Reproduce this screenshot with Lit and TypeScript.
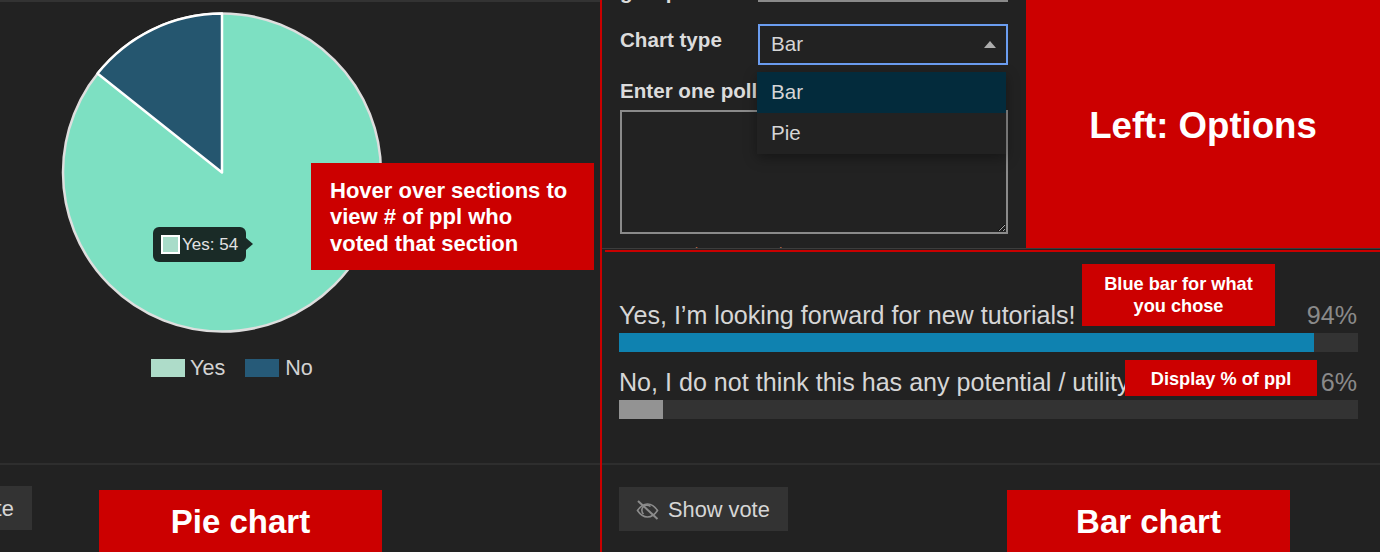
import { LitElement, html, css, svg } from 'lit';
import { customElement } from 'lit/decorators.js';

const CX = 170;
const CY = 170.5;
const R = 159;
// the "No" slice runs from 12 o'clock back to this rim point
const NO_X = CX - 124.5;
const NO_Y = CY - 99;

const options = [
  { label: 'Yes, I’m looking forward for new tutorials!', pct: 94, chosen: true },
  { label: 'No, I do not think this has any potential / utility', pct: 6, chosen: false },
];

@customElement('app-root')
export class AppRoot extends LitElement {
  static styles = css`
    :host {
      display: block;
      position: relative;
      width: 1380px;
      height: 552px;
      overflow: hidden;
      background: #222222;
      color: #d6d6d6;
      font-family: 'Liberation Sans', Arial, sans-serif;
    }

    .page {
      display: flex;
      height: 552px;
    }

    /* left panel: pie */
    .pie-panel {
      display: flex;
      flex-direction: column;
      flex: 0 0 600px;
      box-sizing: border-box;
      border-top: 2px solid #333333;
      overflow: hidden;
    }

    .pie-body {
      display: flex;
      flex-direction: column;
      height: 461px;
      box-sizing: border-box;
    }

    .pie {
      display: block;
      width: 340px;
      height: 340px;
      margin-left: 52px;
    }

    .legend {
      display: flex;
      align-items: center;
      margin: 14px 0 0 151px;
      font-size: 21.6px;
      line-height: 24px;
      color: #d2d2d2;
    }

    .swatch {
      width: 34px;
      height: 18px;
    }

    .swatch.yes {
      background: #aedcc9;
      margin-right: 5px;
    }

    .swatch.no {
      background: #265a78;
      margin-left: 20px;
      margin-right: 6px;
    }

    .footer {
      flex: 1;
      border-top: 2px solid #2e2e2e;
      padding-top: 21px;
    }

    .pie-panel .vote-btn {
      margin-left: -137px;
    }

    .vote-btn {
      display: inline-flex;
      align-items: center;
      box-sizing: border-box;
      width: 169px;
      height: 44px;
      padding: 1px 0 0 17px;
      gap: 9px;
      background: #333333;
      color: #d6d6d6;
      font-size: 21.8px;
    }

    .vote-btn svg {
      flex: none;
      width: 23px;
      height: 20px;
    }

    /* right column */
    .right {
      display: flex;
      flex-direction: column;
      flex: 1;
      min-width: 0;
      border-left: 2px solid #c90000;
    }

    .top {
      display: flex;
      flex: 0 0 248px;
      overflow: hidden;
    }

    .form {
      display: flex;
      flex-direction: column;
      flex: 0 0 424px;
      box-sizing: border-box;
      padding-left: 18px;
      overflow: hidden;
    }

    .field {
      display: flex;
      flex: none;
      height: 41px;
    }

    .field.cut {
      margin-top: -39px;
      margin-bottom: 22px;
    }

    .field-label {
      flex: 0 0 138px;
      padding-top: 4px;
      font-size: 20.6px;
      line-height: 23px;
      font-weight: 700;
      color: #dcdcdc;
    }

    .field.cut .field-label {
      padding-top: 19px;
    }

    .input {
      flex: none;
      box-sizing: border-box;
      width: 250px;
      height: 41px;
      border: 2px solid #8a8a8a;
    }

    .select {
      position: relative;
      display: flex;
      align-items: center;
      padding: 0 0 2px 11px;
      border-color: #6b9df0;
      font-size: 20.6px;
    }

    .caret {
      position: absolute;
      right: 10px;
      top: 15px;
      border-left: 6px solid transparent;
      border-right: 6px solid transparent;
      border-bottom: 7px solid #adadad;
    }

    .menu {
      position: absolute;
      left: -3px;
      top: 46px;
      z-index: 2;
      width: 249px;
      background: #222222;
      box-shadow: 0 4px 12px rgba(0, 0, 0, 0.35);
    }

    .menu div {
      box-sizing: border-box;
      height: 41px;
      padding-left: 14px;
      font-size: 20.6px;
      line-height: 39px;
    }

    .menu .active {
      background: #032b3c;
    }

    .poll-label {
      flex: none;
      margin-top: 14px;
      height: 23px;
      font-size: 20.6px;
      line-height: 23px;
      font-weight: 700;
      color: #dcdcdc;
    }

    textarea {
      display: block;
      flex: none;
      box-sizing: border-box;
      width: 388px;
      height: 124px;
      margin: 8px 0 0;
      padding: 0;
      border: 2px solid #8a8a8a;
      border-radius: 0;
      background: transparent;
      outline: none;
    }

    .hint {
      flex: none;
      margin: 11px 0 0 8px;
      font-size: 15px;
      line-height: 15px;
      color: #b8674a;
      white-space: nowrap;
    }

    .options-title {
      display: flex;
      flex: 1;
      align-items: center;
      justify-content: center;
      padding-top: 3px;
      background: #cc0000;
      color: #ffffff;
      font-size: 36.6px;
      font-weight: 700;
    }

    .rules {
      flex: none;
      height: 4px;
      box-sizing: border-box;
      border-top: 1px solid #3c3c3c;
    }

    .rules div {
      height: 2px;
      margin: 1px 0 0 3px;
      background: #c90000;
    }

    .bars {
      display: flex;
      flex-direction: column;
      flex: 0 0 211px;
      box-sizing: border-box;
      padding: 47px 22px 0 17px;
    }

    .bar-head {
      display: flex;
      justify-content: space-between;
      align-items: baseline;
      height: 34px;
      font-size: 25.1px;
      line-height: 32px;
      white-space: nowrap;
    }

    .pct {
      padding-right: 1px;
      color: #8a8a8a;
    }

    .track {
      height: 19px;
      margin-bottom: 14px;
      background: #333333;
    }

    .fill {
      height: 100%;
      background: #939393;
    }

    .fill.chosen {
      background: #0f82b0;
    }

    .right .footer {
      padding-top: 22px;
      padding-left: 17px;
    }

    /* red callouts laid over the screenshot */
    .note {
      position: absolute;
      z-index: 3;
      box-sizing: border-box;
      display: flex;
      align-items: center;
      justify-content: center;
      background: #cc0000;
      color: #ffffff;
      font-weight: 700;
      text-align: center;
    }

    .note.hover {
      left: 311px;
      top: 163px;
      width: 283px;
      height: 107px;
      justify-content: flex-start;
      padding: 2px 0 0 19px;
      font-size: 22px;
      line-height: 26.5px;
      text-align: left;
    }

    .note.blue {
      left: 1082px;
      top: 264px;
      width: 193px;
      height: 62px;
      font-size: 18.2px;
      line-height: 22px;
    }

    .note.display {
      left: 1125px;
      top: 360px;
      width: 192px;
      height: 36px;
      padding-top: 2px;
      font-size: 18.2px;
    }

    .note.caption {
      top: 490px;
      width: 283px;
      height: 62px;
      padding-top: 2px;
      font-size: 33px;
    }

    .note.pie-cap {
      left: 99px;
    }

    .note.bar-cap {
      left: 1007px;
    }

    .tooltip {
      position: absolute;
      z-index: 1;
      left: 153px;
      top: 227px;
      display: flex;
      align-items: center;
      box-sizing: border-box;
      width: 93px;
      height: 35px;
      padding-left: 8px;
      gap: 2px;
      border-radius: 6px;
      background: #1a2b27;
      color: #e2e2e2;
      font-size: 17px;
    }

    .tooltip::after {
      content: '';
      position: absolute;
      left: 93px;
      top: 11px;
      border-top: 6px solid transparent;
      border-bottom: 6px solid transparent;
      border-left: 7px solid #1a2b27;
    }

    .tip-swatch {
      box-sizing: border-box;
      width: 19px;
      height: 19px;
      border: 2px solid #ffffff;
      background: #a8dcc9;
    }
  `;

  private eyeOff() {
    return html`<svg viewBox="0 0 23 20" fill="none" stroke="#8c8c8c" stroke-width="1.6">
      <path d="M1.5 10.5C4.5 6 8 4 11.5 4s7 2 10 6.5c-3 4.5-6.5 6.5-10 6.5s-7-2-10-6.5z" />
      <path d="M7.5 14a5 5 0 0 1 7-7.5" />
      <path d="M2 1l19.5 18" stroke-width="2" />
    </svg>`;
  }

  private pie() {
    return html`<svg class="pie" viewBox="0 0 340 340">
      ${svg`
        <circle cx=${CX} cy=${CY} r=${R} fill="#7de0c2" stroke="#dedede" stroke-width="2.5" />
        <path d="M${CX} ${CY}V${CY - R}A${R} ${R} 0 0 0 ${NO_X} ${NO_Y}Z"
          fill="#25566f" stroke="#ffffff" stroke-width="2.5" stroke-linejoin="round" />
      `}
    </svg>`;
  }

  render() {
    return html`
      <div class="page">
        <section class="pie-panel">
          <div class="pie-body">
            ${this.pie()}
            <div class="legend">
              <span class="swatch yes"></span>Yes
              <span class="swatch no"></span>No
            </div>
          </div>
          <div class="footer">
            <div class="vote-btn">${this.eyeOff()}Show vote</div>
          </div>
        </section>

        <section class="right">
          <div class="top">
            <div class="form">
              <div class="field cut">
                <div class="field-label">group</div>
                <div class="input"></div>
              </div>
              <div class="field">
                <div class="field-label">Chart type</div>
                <div class="input select">
                  Bar
                  <span class="caret"></span>
                  <div class="menu">
                    <div class="active">Bar</div>
                    <div>Pie</div>
                  </div>
                </div>
              </div>
              <div class="poll-label">Enter one poll option per line</div>
              <textarea></textarea>
              <div class="hint">* Enter at least two options</div>
            </div>
            <div class="options-title">Left: Options</div>
          </div>
          <div class="rules"><div></div></div>
          <div class="bars">
            ${options.map(
              (o) => html`
                <div class="bar-head"><span>${o.label}</span><span class="pct">${o.pct}%</span></div>
                <div class="track">
                  <div class="fill ${o.chosen ? 'chosen' : ''}" style="width: ${o.pct}%"></div>
                </div>
              `
            )}
          </div>
          <div class="footer">
            <div class="vote-btn">${this.eyeOff()}Show vote</div>
          </div>
        </section>
      </div>

      <div class="tooltip"><span class="tip-swatch"></span>Yes: 54</div>

      <div class="note hover"><span>Hover over sections to<br />view # of ppl who<br />voted that section</span></div>
      <div class="note blue"><span>Blue bar for what<br />you chose</span></div>
      <div class="note display">Display % of ppl</div>
      <div class="note caption pie-cap">Pie chart</div>
      <div class="note caption bar-cap">Bar chart</div>
    `;
  }
}
